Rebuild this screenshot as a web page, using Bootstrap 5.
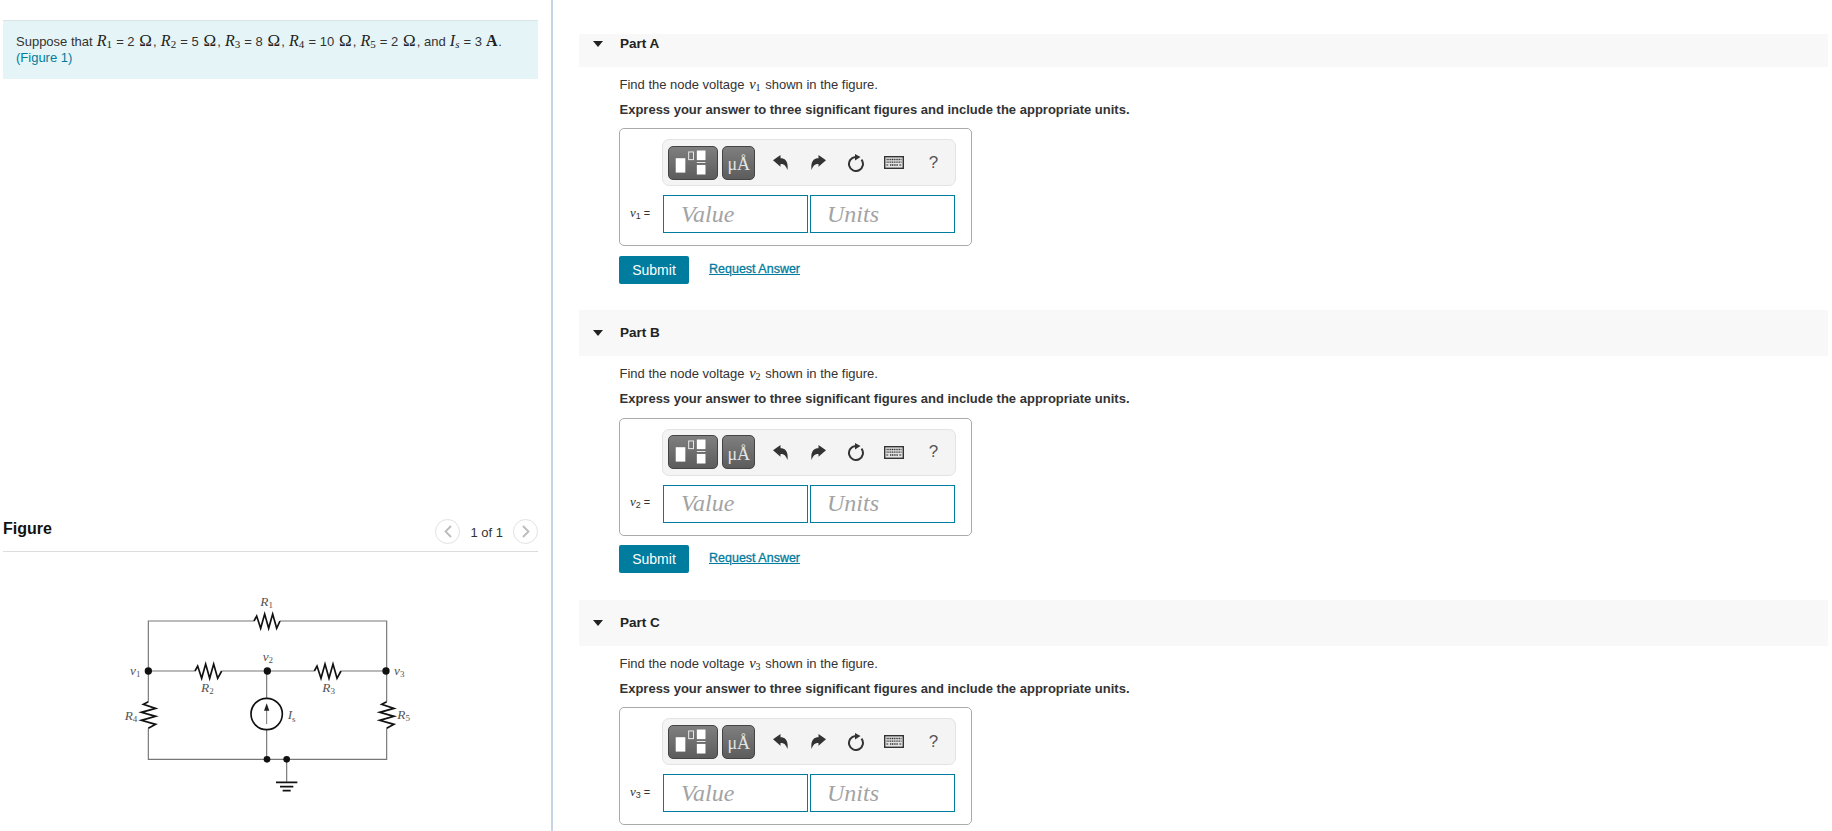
<!DOCTYPE html>
<html lang="en"><head><meta charset="utf-8"><title>Node voltages</title>
<link href="https://cdn.jsdelivr.net/npm/bootstrap@5.3.0/dist/css/bootstrap.min.css" rel="stylesheet">
<style>
html,body{height:100%;overflow:hidden}
body{font-family:"Liberation Sans",Arial,sans-serif;font-size:13px;line-height:20px;color:#333;background:#fff}
.left-pane{width:553px;flex:none;height:831px;border-right:2px solid #c5d5e5;padding:20px 13px 0 3px}
.intro-box{background:#e5f5f7;border-top:1px solid #dbe4e6;padding:12px 13px 11px;height:59px;line-height:16px}
.fig-link,.fig-link:hover{color:#007c9e;text-decoration:none}
.mth{font-family:"Liberation Serif",serif;font-size:16px;color:#222;margin:0 .5px}
.mth i{font-weight:400}
.mth sub{font-size:11px;bottom:-.2em}
.omg{font-size:17px;margin:0 1.15px}
.fig-head{margin-top:440px;height:33px;border-bottom:1px solid #ddd}
.fig-title{font-size:16px;font-weight:700;color:#111;margin:0;line-height:20px}
.pager-dot{width:25px;height:25px;border:1px solid #e2e2e2;border-radius:50%}
.pager-num{font-size:13px;color:#333;margin:3px 10px 0}
.circuit{display:block;margin:28px 0 0 97px}
.circuit text{font-family:"Liberation Serif",serif;font-style:italic;fill:#555;font-size:40px}
.circuit .sb{font-size:27px;font-style:normal}
.right-pane{flex:1;padding:20.5px 4px 0 26px;min-width:0}
.part{height:289.5px}
.part:last-child{height:auto}
.part-head{height:46px;background:#f8f8f8;display:flex;align-items:center;font-size:13.5px;font-weight:700;color:#222}
.part-head.is-first{background:linear-gradient(#fff 13.5px,#f8f8f8 13.5px)}
.caret-mark{width:0;height:0;border-left:5.5px solid transparent;border-right:5.5px solid transparent;border-top:6.5px solid #222;margin:0 17px 0 14px}
.part-body{padding-left:40px}
.ask{margin:7px 0 6px;height:20px;padding-left:.5px}
.ask .mth{font-size:14.5px;margin:0 1px}
.ask .mth sub{font-size:10px}
.ask-strong{margin:0 0 8.5px;height:20px;font-weight:700;padding-left:.5px}
.ans-box{width:353px;height:118px;border:1px solid #aaa;border-radius:5px;padding:10px 0 0 42px}
.tool-strip{width:294px;height:47px;background:#f4f4f4;border:1px solid #e3e3e3;border-radius:7px;padding:5px 4px}
.tpl-btn{height:34px;padding:0;border:1px solid #444;border-radius:5px;background:linear-gradient(#7f7f7f,#5c5c5c);display:flex;align-items:center;justify-content:center;color:#eee}
.tpl-a{width:50px;margin-left:1px}
.tpl-b{width:34px;margin-left:4px;font-family:"Liberation Serif",serif;font-size:18px;padding-top:3px;color:#e4e4e4}
.tool-cell{width:38.6px;display:flex;justify-content:center;align-items:center;height:34px;color:#333}
.tool-first{margin-left:6px}
.tool-q{font-size:17px;color:#555;padding-left:3px}
.inp-row{margin-top:9px}
.v-lab{width:43px;flex:none;margin-left:-43px;padding:0 0 3px 11px;font-size:11px;white-space:nowrap;color:#333}
.v-lab i{font-family:"Liberation Serif",serif;font-size:13px}
.v-lab sub{font-size:9px}
.val-in.form-control{width:145px;height:38px;border:1px solid #007c9e;border-radius:0;padding:0 0 0 17px;font-family:"Liberation Serif",serif;font-style:italic;font-size:24px;background:#fff;box-shadow:none;margin-left:1px}
.val-in.form-control::placeholder{color:#a3a3a3;opacity:1}
.val-in.form-control + .val-in.form-control{margin-left:2px;padding-left:16px}
.act-row{margin-top:9.5px}
.sub-btn.btn{width:70px;height:28px;padding:0;border:0;border-radius:2px;background:#007c9e;color:#fff;font-size:14px;line-height:28px}
.req-link{margin-left:20px;color:#007c9e;font-size:12.5px;-webkit-text-stroke:.3px #007c9e;text-decoration:underline;position:relative;top:-1px}
</style></head><body>
<svg class="d-none" xmlns="http://www.w3.org/2000/svg">
<symbol id="ic-tpl" viewBox="0 0 50 34">
<rect x="7" y="12" width="10" height="15" fill="#fff"/>
<rect x="20.500" y="5.500" width="5" height="8" fill="none" stroke="#eee"/>
<rect x="29" y="4" width="9" height="10" fill="#fff"/><rect x="29" y="16" width="9" height="1" fill="#eee"/><rect x="29" y="19" width="9" height="10" fill="#fff"/>
</symbol>
<symbol id="ic-undo" viewBox="0 0 14 14"><path d="M0 5 7 0V3C11.500 3 14.500 6 13.500 14 12 10 10.500 8.500 7 8.500V11Z" fill="#333"/></symbol>
<symbol id="ic-redo" viewBox="0 0 14 14"><path d="M14 5 7 0V3C2.500 3 -.5 6 .5 14 2 10 3.500 8.500 7 8.500V11Z" fill="#333"/></symbol>
<symbol id="ic-reset" viewBox="0 0 18 18"><path d="M14.500 5.700A7 7 0 1 1 8.500 3" fill="none" stroke="#333" stroke-width="2"/><path d="M8 0 13.500 3 8 6.500Z" fill="#333"/></symbol>
<symbol id="ic-kbd" viewBox="0 0 20 13"><rect x=".7" y=".7" width="18.600" height="11.600" fill="#e4e4e4" stroke="#333" stroke-width="1.400"/><path d="M2.500 3.500h15M2.500 6.200h15M2.500 9h2M6 9h8M15.500 9h2" stroke="#333" stroke-width="1.300" stroke-dasharray="1.200 .6"/></symbol>
</svg>
<div class="d-flex">
<aside class="left-pane">
<div class="intro-box">Suppose that <span class="mth"><i>R</i><sub>1</sub></span> = 2 <span class="mth omg">Ω</span>, <span class="mth"><i>R</i><sub>2</sub></span> = 5 <span class="mth omg">Ω</span>, <span class="mth"><i>R</i><sub>3</sub></span> = 8 <span class="mth omg">Ω</span>, <span class="mth"><i>R</i><sub>4</sub></span> = 10 <span class="mth omg">Ω</span>, <span class="mth"><i>R</i><sub>5</sub></span> = 2 <span class="mth omg">Ω</span>, and <span class="mth"><i>I</i><sub><i>s</i></sub></span> = 3 <span class="mth"><b>A</b></span>.<br><a class="fig-link" href="#">(Figure 1)</a></div>
<div class="fig-head d-flex justify-content-between align-items-start">
<h2 class="fig-title">Figure</h2>
<div class="d-flex align-items-center">
<span class="pager-dot d-flex align-items-center justify-content-center"><svg width="8" height="13" viewBox="0 0 8 13"><path d="M7 1 1.500 6.500 7 12" fill="none" stroke="#bbb" stroke-width="1.800"/></svg></span>
<span class="pager-num">1 of 1</span>
<span class="pager-dot d-flex align-items-center justify-content-center"><svg width="8" height="13" viewBox="0 0 8 13"><path d="M1 1 6.500 6.500 1 12" fill="none" stroke="#bbb" stroke-width="1.800"/></svg></span>
</div>
</div>
<svg class="circuit" width="340" height="220" viewBox="0 0 1020 660" xmlns="http://www.w3.org/2000/svg">
<g fill="none" stroke="#777" stroke-width="3.500">
<path d="M462 123H145V365M145 445V538H860V445M860 365V123H540"/>
<path d="M145 273H285M365 273H643M723 273H858"/>
<path d="M500 273V355M500 450V538M560 538V605"/>
<path d="M500 432V378" stroke-width="3"/>
</g>
<g fill="none" stroke="#111" stroke-width="5" stroke-linejoin="miter">
<path d="M462 123 470 108 482 145 494 102 506 145 518 102 530 145 540 123"/>
<path d="M285 273 293 258 305 295 317 252 329 295 341 252 353 295 365 273"/>
<path d="M643 273 651 258 663 295 675 252 687 295 699 252 711 295 723 273"/>
<path d="M145 365 130 373 167 385 124 397 167 409 124 421 167 433 145 445"/>
<path d="M860 365 845 373 882 385 839 397 882 409 839 421 882 433 860 445"/>
<circle cx="500" cy="402" r="47"/>
<path d="M528 607H592M540 620H580M548 632H572"/>
</g>
<path d="M500 370 492 392H508Z" fill="#222"/>
<g fill="#111"><circle cx="145" cy="273" r="11"/><circle cx="502" cy="273" r="11"/><circle cx="858" cy="273" r="11"/><circle cx="501" cy="538" r="10"/><circle cx="560" cy="538" r="10"/></g>
<text x="481" y="77">R<tspan class="sb" dy="7">1</tspan></text>
<text x="303" y="336">R<tspan class="sb" dy="7">2</tspan></text>
<text x="667" y="336">R<tspan class="sb" dy="7">3</tspan></text>
<text x="74" y="420">R<tspan class="sb" dy="7">4</tspan></text>
<text x="892" y="417">R<tspan class="sb" dy="7">5</tspan></text>
<text x="90" y="284">v<tspan class="sb" dy="7">1</tspan></text>
<text x="488" y="242">v<tspan class="sb" dy="7">2</tspan></text>
<text x="882" y="284">v<tspan class="sb" dy="7">3</tspan></text>
<text x="563" y="418">I<tspan class="sb" dy="7" font-style="italic">s</tspan></text>
</svg>
</aside>
<main class="right-pane">

<section class="part">
<div class="part-head is-first"><span class="caret-mark"></span>Part A</div>
<div class="part-body">
<p class="ask">Find the node voltage <span class="mth"><i>v</i><sub>1</sub></span> shown in the figure.</p>
<p class="ask-strong">Express your answer to three significant figures and include the appropriate units.</p>
<div class="ans-box">
<div class="tool-strip d-flex align-items-center">
<span class="tpl-btn tpl-a"><svg width="50" height="34"><use href="#ic-tpl"/></svg></span><span class="tpl-btn tpl-b">μÅ</span>
<span class="tool-cell tool-first"><svg width="15" height="15"><use href="#ic-undo"/></svg></span>
<span class="tool-cell"><svg width="15" height="15"><use href="#ic-redo"/></svg></span>
<span class="tool-cell"><svg width="18" height="18"><use href="#ic-reset"/></svg></span>
<span class="tool-cell"><svg width="20" height="13"><use href="#ic-kbd"/></svg></span>
<span class="tool-cell tool-q">?</span>
</div>
<div class="inp-row d-flex align-items-center"><span class="v-lab"><i>v</i><sub>1</sub> =</span><input class="form-control val-in" placeholder="Value"><input class="form-control val-in" placeholder="Units"></div>
</div>
<div class="act-row d-flex align-items-center"><button class="btn sub-btn">Submit</button><a class="req-link" href="#">Request Answer</a></div>
</div>
</section>

<section class="part">
<div class="part-head"><span class="caret-mark"></span>Part B</div>
<div class="part-body">
<p class="ask">Find the node voltage <span class="mth"><i>v</i><sub>2</sub></span> shown in the figure.</p>
<p class="ask-strong">Express your answer to three significant figures and include the appropriate units.</p>
<div class="ans-box">
<div class="tool-strip d-flex align-items-center">
<span class="tpl-btn tpl-a"><svg width="50" height="34"><use href="#ic-tpl"/></svg></span><span class="tpl-btn tpl-b">μÅ</span>
<span class="tool-cell tool-first"><svg width="15" height="15"><use href="#ic-undo"/></svg></span>
<span class="tool-cell"><svg width="15" height="15"><use href="#ic-redo"/></svg></span>
<span class="tool-cell"><svg width="18" height="18"><use href="#ic-reset"/></svg></span>
<span class="tool-cell"><svg width="20" height="13"><use href="#ic-kbd"/></svg></span>
<span class="tool-cell tool-q">?</span>
</div>
<div class="inp-row d-flex align-items-center"><span class="v-lab"><i>v</i><sub>2</sub> =</span><input class="form-control val-in" placeholder="Value"><input class="form-control val-in" placeholder="Units"></div>
</div>
<div class="act-row d-flex align-items-center"><button class="btn sub-btn">Submit</button><a class="req-link" href="#">Request Answer</a></div>
</div>
</section>

<section class="part">
<div class="part-head"><span class="caret-mark"></span>Part C</div>
<div class="part-body">
<p class="ask">Find the node voltage <span class="mth"><i>v</i><sub>3</sub></span> shown in the figure.</p>
<p class="ask-strong">Express your answer to three significant figures and include the appropriate units.</p>
<div class="ans-box">
<div class="tool-strip d-flex align-items-center">
<span class="tpl-btn tpl-a"><svg width="50" height="34"><use href="#ic-tpl"/></svg></span><span class="tpl-btn tpl-b">μÅ</span>
<span class="tool-cell tool-first"><svg width="15" height="15"><use href="#ic-undo"/></svg></span>
<span class="tool-cell"><svg width="15" height="15"><use href="#ic-redo"/></svg></span>
<span class="tool-cell"><svg width="18" height="18"><use href="#ic-reset"/></svg></span>
<span class="tool-cell"><svg width="20" height="13"><use href="#ic-kbd"/></svg></span>
<span class="tool-cell tool-q">?</span>
</div>
<div class="inp-row d-flex align-items-center"><span class="v-lab"><i>v</i><sub>3</sub> =</span><input class="form-control val-in" placeholder="Value"><input class="form-control val-in" placeholder="Units"></div>
</div>
</div>
</section>

</main>
</div>
<script src="https://cdn.jsdelivr.net/npm/bootstrap@5.3.0/dist/js/bootstrap.bundle.min.js"></script>
</body></html>
